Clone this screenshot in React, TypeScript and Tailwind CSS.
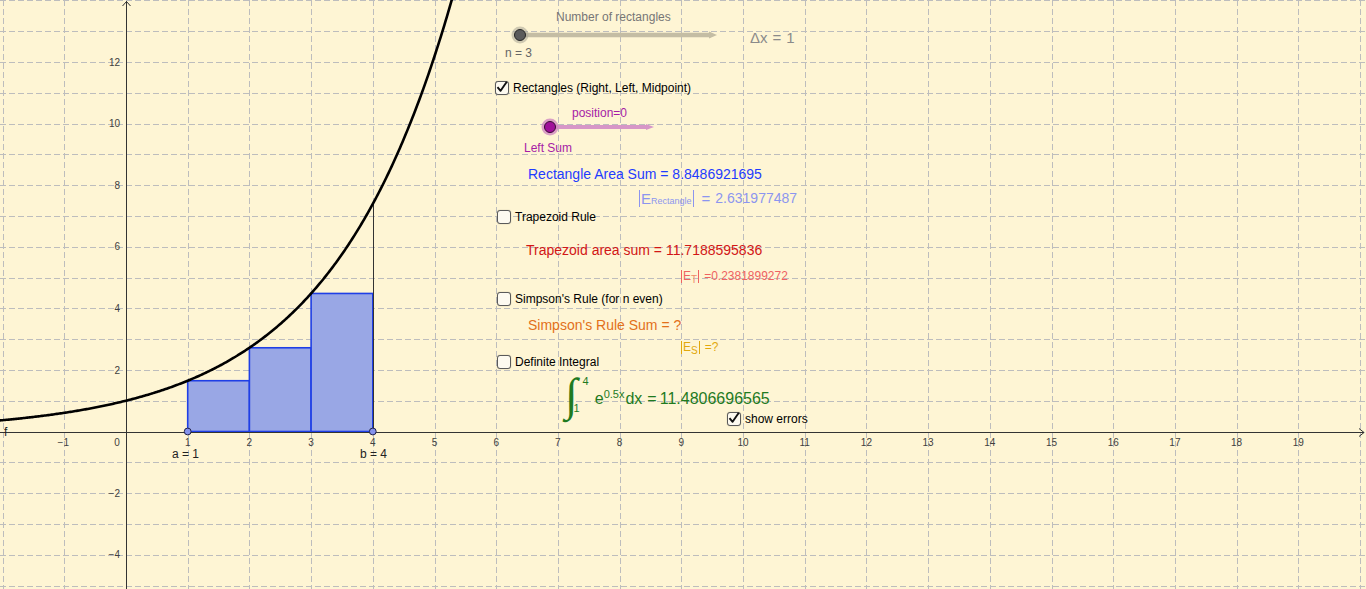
const sx = 61.7
const sy = 30.8
const ox = 126
const oy = 431.5

const X = (k: number) => ox + k * sx
const Y = (v: number) => oy - v * sy
const crisp = (p: number) => Math.round(p) + 0.5

const f = (x: number) => Math.exp(0.5 * x)

function curvePath() {
  const pts: string[] = []
  for (let x = -2.1; x <= 5.35; x += 0.02) {
    pts.push(`${X(x).toFixed(2)},${Y(f(x)).toFixed(2)}`)
  }
  return 'M' + pts.join(' L')
}

function Graph() {
  const vLines = []
  for (let k = -2; k <= 20; k++) vLines.push(crisp(X(k)))
  const hLines = []
  for (let j = -5; j <= 14; j++) hLines.push(crisp(Y(j)))

  const xLabels = []
  for (let k = -1; k <= 19; k++) if (k !== 0) xLabels.push(k)
  const yLabels = [-4, -2, 2, 4, 6, 8, 10, 12]

  const ax = crisp(ox)
  const ay = crisp(oy)

  return (
    <svg width="1366" height="589" className="absolute left-0 top-0" fontFamily="'Liberation Sans', Arial, sans-serif">
      {/* grid */}
      <g stroke="#bdbdbd" strokeWidth="1" strokeDasharray="6 3">
        {vLines.map((x) => (
          <line key={'v' + x} x1={x} y1={0} x2={x} y2={589} />
        ))}
        {hLines.map((y) => (
          <line key={'h' + y} x1={0} y1={y} x2={1366} y2={y} />
        ))}
      </g>

      {/* left sum rectangles */}
      {[1, 2, 3].map((k) => (
        <rect
          key={k}
          x={X(k)}
          y={Y(f(k))}
          width={sx}
          height={oy - Y(f(k))}
          fill="#99a7e5"
          stroke="#1f3fe6"
          strokeWidth="1.6"
        />
      ))}

      {/* axes */}
      <g stroke="#333" strokeWidth="1" fill="none">
        <line x1={0} y1={ay} x2={1364} y2={ay} />
        <line x1={ax} y1={1} x2={ax} y2={589} />
        <polyline points={`1359,${ay - 4} 1364,${ay} 1359,${ay + 4}`} />
        <polyline points={`${ax - 4},6 ${ax},1.5 ${ax + 4},6`} />
      </g>

      <g fontSize="10" fill="#404040">
        {xLabels.map((k) => (
          <text key={'xl' + k} x={X(k) + (k < 0 ? -1 : 0)} y={445.5} textAnchor="middle">
            {k < 0 ? '\u2212' + Math.abs(k) : k}
          </text>
        ))}
        <text x={117} y={445.5} textAnchor="middle">0</text>
        {yLabels.map((j) => (
          <text key={'yl' + j} x={120} y={Y(j) + 3.6} textAnchor="end">
            {j < 0 ? '\u2212' + Math.abs(j) : j}
          </text>
        ))}
      </g>

      <line x1={crisp(X(4))} y1={Y(f(4))} x2={crisp(X(4))} y2={oy} stroke="#333" strokeWidth="1" />

      <path d={curvePath()} fill="none" stroke="#000" strokeWidth="2.6" strokeLinejoin="round" />

      <circle cx={X(1)} cy={oy} r="3.4" fill="#8492ec" stroke="#22224a" strokeWidth="1" />
      <circle cx={X(4)} cy={oy} r="3.4" fill="#8492ec" stroke="#22224a" strokeWidth="1" />

      <g fontSize="12" fill="#222">
        <text x={172} y={457.5}>a = 1</text>
        <text x={360} y={457.5}>b = 4</text>
        <text x={4} y={436}>f</text>
      </g>

      {/* slider n */}
      <line x1={520} y1={35} x2={711} y2={35} stroke="#c4bda4" strokeWidth="4.5" />
      <polygon points="709,31.5 717,35 709,38.5" fill="#c4bda4" />
      <circle cx={520} cy={35} r="8.5" fill="#a8a494" opacity="0.55" />
      <circle cx={520} cy={35} r="5.5" fill="#5b5b5b" stroke="#262626" strokeWidth="1" />

      {/* slider position */}
      <line x1={550} y1={127} x2={648} y2={127} stroke="#d796c7" strokeWidth="4" />
      <polygon points="646,124 654,127 646,130" fill="#d796c7" />
      <circle cx={550} cy={127} r="8.5" fill="#d18ac0" opacity="0.8" />
      <circle cx={550} cy={127} r="5.5" fill="#a0109a" stroke="#3a0a36" strokeWidth="1" />
    </svg>
  )
}

function CheckLabel({ checked, label, className }: { checked?: boolean; label: string; className: string }) {
  return (
    <div className={`absolute flex items-center gap-[4px] text-[12px] text-black ${className}`}>
      <div className="relative h-[14px] w-[14px] rounded-[3px] border border-[#5a5a5a] bg-[#fdfaf0] shadow-[0_0_1px_rgba(0,0,0,0.4)]">
        {checked && (
          <svg width="14" height="14" viewBox="0 0 14 14" className="absolute -left-px -top-[2px]">
            <path d="M2.5 7.2 L5.6 10.8 L11.8 1.8" fill="none" stroke="#111" strokeWidth="1.9" strokeLinejoin="round" />
          </svg>
        )}
      </div>
      <span>{label}</span>
    </div>
  )
}

function ErrorTerm({ sub, value, className, color, subColor }: { sub: string; value: string; className: string; color: string; subColor?: string }) {
  return (
    <div className={`absolute flex h-[14px] items-center text-[12px] ${color} ${className}`}>
      <span className="h-[13px] w-px bg-current" />
      <span className="ml-[1px]">E</span>
      <span className={`translate-y-[4px] text-[10px] ${subColor ?? ''}`}>{sub}</span>
      <span className="ml-[1px] h-[13px] w-px bg-current" />
      <span className="ml-[5px]">{value}</span>
    </div>
  )
}

export default function App() {
  return (
    <div className="relative h-[589px] w-[1366px] overflow-hidden bg-[#fef5d4] font-['Liberation_Sans',Arial,sans-serif] leading-none">
      <Graph />

      {/* slider n labels */}
      <div className="absolute left-[556px] top-[11px] text-[12px] text-[#767676]">Number of rectangles</div>
      <div className="absolute left-[505px] top-[47px] text-[12px] text-[#666]">n = 3</div>
      <div className="absolute left-[750px] top-[30px] flex gap-[5px] text-[15px] text-[#8a8a8a]">
        <span>Δx</span>
        <span>=</span>
        <span>1</span>
      </div>

      <CheckLabel checked label="Rectangles (Right, Left, Midpoint)" className="left-[495px] top-[81px]" />

      <div className="absolute left-[572px] top-[107px] text-[12px] text-[#a61ca6]">position=0</div>
      <div className="absolute left-[524px] top-[142px] text-[12px] text-[#a61ca6]">Left Sum</div>

      <div className="absolute left-[528px] top-[167px] text-[14px] text-[#1e3cff]">Rectangle Area Sum = 8.8486921695</div>

      <div className="absolute left-[639px] top-[189px] flex h-[18px] items-center text-[15px] text-[#8c95ef]">
        <span className="h-[17px] w-px bg-current" />
        <span className="ml-[1px]">E</span>
        <span className="translate-y-[3px] text-[9px]">Rectangle</span>
        <span className="ml-[1px] h-[17px] w-px bg-current" />
        <span className="ml-[8px]">=</span>
        <span className="ml-[5px] text-[14px]">2.631977487</span>
      </div>

      <CheckLabel label="Trapezoid Rule" className="left-[497px] top-[210px]" />

      <div className="absolute left-[526px] top-[243px] text-[14px] text-[#d21616]">Trapezoid area sum = 11.7188595836</div>

      <ErrorTerm sub="T" value="=0.2381899272" className="left-[681px] top-[269px]" color="text-[#ef6262]" subColor="text-[#f08a6a]" />

      <CheckLabel label="Simpson's Rule (for n even)" className="left-[497px] top-[292px]" />

      <div className="absolute left-[528px] top-[318px] text-[14px] text-[#e2701a]">Simpson's Rule Sum = ?</div>

      <ErrorTerm sub="S" value="=?" className="left-[681px] top-[340px]" color="text-[#e2a80c]" />

      <CheckLabel label="Definite Integral" className="left-[497px] top-[355px]" />

      {/* integral */}
      <div className="absolute left-[565px] top-[372px] flex items-start text-[#1f7a1f]">
        <span className="font-['Liberation_Serif',serif] text-[46px]">∫</span>
        <div className="ml-[-4px] flex h-[46px] flex-col justify-between py-[4px] text-[11px]">
          <span className="ml-[9px]">4</span>
          <span>1</span>
        </div>
        <div className="ml-[6px] mt-[19px] flex items-baseline text-[16px]">
          <span>e</span>
          <span className="-translate-y-[6px] text-[11px]">0.5x</span>
          <span className="ml-[1px]">dx</span>
          <span className="ml-[5px]">=</span>
          <span className="ml-[3px]">11.4806696565</span>
        </div>
      </div>

      <CheckLabel checked label="show errors" className="left-[727px] top-[412px]" />
    </div>
  )
}
